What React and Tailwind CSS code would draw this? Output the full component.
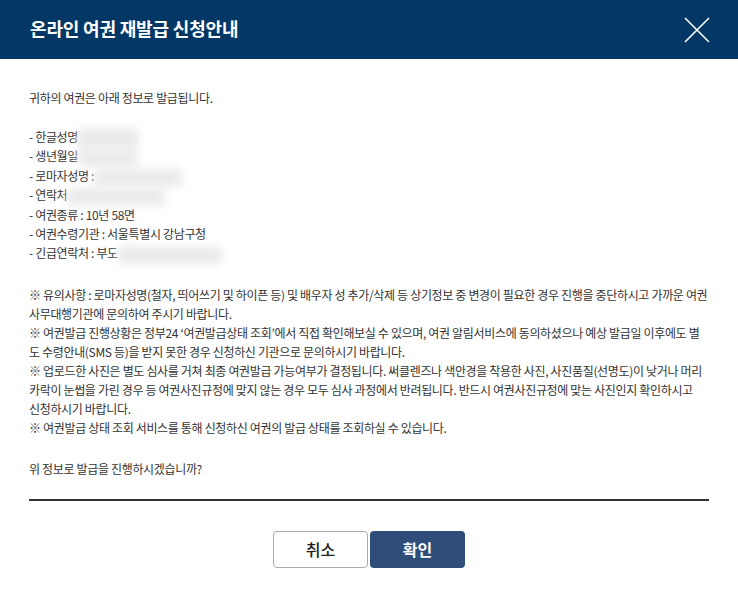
import React from 'react';

const font = { fontFamily: '"Noto Sans CJK KR", "Noto Sans", sans-serif' };

function Blur({ w, h = 18 }) {
  return (
    <span
      className="inline-block align-middle bg-[#ebebeb] blur-[4px] rounded-sm"
      style={{ width: w, height: h }}
    />
  );
}

const notes = [
  '※ 유의사항 : 로마자성명(철자, 띄어쓰기 및 하이픈 등) 및 배우자 성 추가/삭제 등 상기정보 중 변경이 필요한 경우 진행을 중단하시고 가까운 여권',
  '사무대행기관에 문의하여 주시기 바랍니다.',
  '※ 여권발급 진행상황은 정부24 ‘여권발급상태 조회’에서 직접 확인해보실 수 있으며, 여권 알림서비스에 동의하셨으나 예상 발급일 이후에도 별',
  '도 수령안내(SMS 등)을 받지 못한 경우 신청하신 기관으로 문의하시기 바랍니다.',
  '※ 업로드한 사진은 별도 심사를 거쳐 최종 여권발급 가능여부가 결정됩니다. 써클렌즈나 색안경을 착용한 사진, 사진품질(선명도)이 낮거나 머리',
  '카락이 눈썹을 가린 경우 등 여권사진규정에 맞지 않는 경우 모두 심사 과정에서 반려됩니다. 반드시 여권사진규정에 맞는 사진인지 확인하시고',
  '신청하시기 바랍니다.',
  '※ 여권발급 상태 조회 서비스를 통해 신청하신 여권의 발급 상태를 조회하실 수 있습니다.',
];

export default function App() {
  return (
    <div className="w-[738px] h-[597px] bg-white overflow-hidden" style={font}>
      {/* Header */}
      <div className="h-[59px] bg-[#023766] flex items-center justify-between pl-[30px] pr-[28px]">
        <h1 className="text-white text-[18px] font-bold tracking-[-0.01em] leading-none pb-[4px]">
          온라인 여권 재발급 신청안내
        </h1>
        <button className="w-[26px] h-[26px] flex items-center justify-center">
          <svg width="26" height="26" viewBox="0 0 26 26" fill="none">
            <path d="M1 1L25 25M25 1L1 25" stroke="white" strokeWidth="1.6" />
          </svg>
        </button>
      </div>

      {/* Body */}
      <div className="px-[29px] pt-[29px] text-[12px] text-[#333] tracking-[-0.028em]">
        <p className="leading-[19px] whitespace-nowrap">귀하의 여권은 아래 정보로 발급됩니다.</p>

        <div className="mt-[20px] leading-[19.4px] whitespace-nowrap">
          <div className="h-[19.4px]">- 한글성명<Blur w={60} h={22} /></div>
          <div className="h-[19.4px]">- 생년월일<Blur w={60} h={18} /></div>
          <div className="h-[19.4px]">- 로마자성명 :<Blur w={88} /></div>
          <div className="h-[19.4px]">- 연락처<Blur w={98} /></div>
          <div className="h-[19.4px]">- 여권종류 : 10년 58면</div>
          <div className="h-[19.4px]">- 여권수령기관 : 서울특별시 강남구청</div>
          <div className="h-[19.4px]">- 긴급연락처 : 부도<Blur w={104} /></div>
        </div>

        <div className="mt-[22px] leading-[19px] whitespace-nowrap">
          {notes.map((n, i) => (
            <div key={i}>{n}</div>
          ))}
        </div>

        <p className="mt-[22px] leading-[19px] whitespace-nowrap">위 정보로 발급을 진행하시겠습니까?</p>

        <div className="mt-[21px] h-[2px] bg-[#333]" />

        <div className="mt-[30px] flex justify-center gap-[2px]">
          <button className="w-[95px] h-[37px] rounded-[4px] border border-[#aaa] bg-white text-[16px] font-medium text-[#222] tracking-normal">
            취소
          </button>
          <button className="w-[95px] h-[37px] rounded-[4px] bg-[#2f4d79] text-[16px] font-bold text-white tracking-normal">
            확인
          </button>
        </div>
      </div>
    </div>
  );
}
